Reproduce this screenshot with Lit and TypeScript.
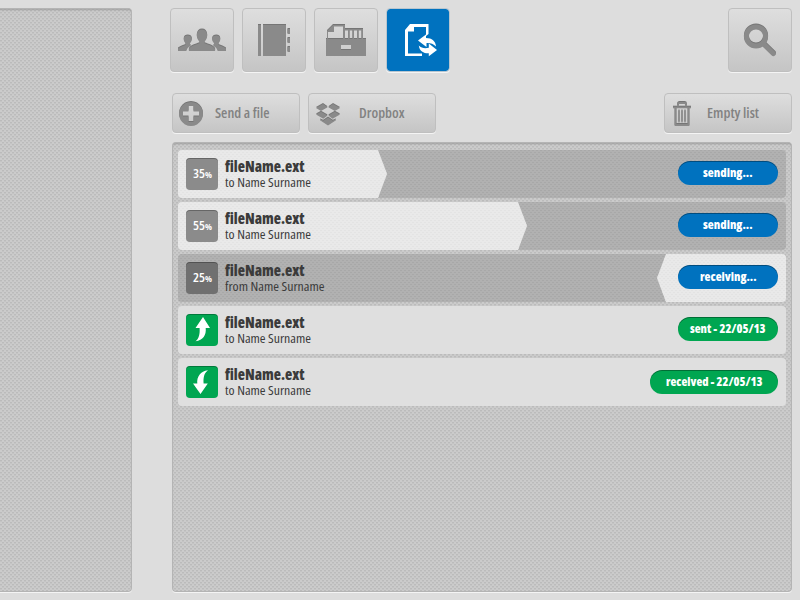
import { LitElement, html, svg, css, nothing } from "lit";
import { customElement, property } from "lit/decorators.js";

/** Text condensed to a set width. */
@customElement("fit-text")
class FitText extends LitElement {
  @property() text = "";
  @property({ type: Number }) width = 50;
  @property({ type: Number }) size = 12;
  @property({ type: Number }) weight = 400;
  static styles = css`
    :host { display: block; line-height: 0; }
    svg { display: block; overflow: visible; }
    text { font-family: "Open Sans", "Noto Sans", sans-serif; font-stretch: 75%; fill: currentColor; }
  `;
  render() {
    return html`<svg width=${this.width} height="16">
      <text x="0" y="12" font-size=${this.size} font-weight=${this.weight}
        textLength=${this.width} lengthAdjust="spacingAndGlyphs">${this.text}</text>
    </svg>`;
  }
}

const icons: Record<string, unknown> = {
  people: svg`<g transform="translate(0 2)">
    <path d="M14 47V44.5C16 43 19 42 21.5 41V39.2C20 37.5 19.6 36.5 19.8 34.5C20 32.5 21.500 31.500 23.7 31.500C26 31.500 27.6 32.500 27.8 34.5C28 36.5 27.4 37.6 26 39.2V41L27 41.9C24.5 43 23 44 22.3 47Z"/>
    <path d="M62 47V44.5C60 43 57 42 54.5 41V39.2C56 37.5 56.4 36.5 56.2 34.5C56 32.5 54.5 31.500 52.3 31.500C50 31.500 48.4 32.500 48.2 34.5C48 36.5 48.6 37.6 50 39.2V41L49 41.9C51.5 43 53 44 53.7 47Z"/>
    <path d="M24.9 47V45C26.6 42 31 41 35.5 39.3V37.8C33.3 35.6 32.7 33 32.8 31C33 27.500 35 25.500 38 25.500C41 25.500 43 27.500 43.2 31C43.3 33 42.7 35.6 40.5 37.8V39.3C45 41 49.4 42 51.1 45V47Z"/></g>`,
  book: svg`<path d="M22 21h3v31h-3zM27 21h23v31H27zM51.5 25h2.5v5h-2.500zM51.5 34h2.5v5h-2.500zM51.5 43h2.5v5h-2.500z"/>`,
  archive: svg`<path fill-rule="evenodd" d="M18 35h1V27L25 21h12v4h18v10h3v17H18zM26 22.5V28h-6v7h15V22.5zM37 26.5v8.5h3v-8.5zM41.5 26.5v8.5h3v-8.5zM46 26.5v8.5h3v-8.5zM50.5 26.5v8.5h3v-8.5zM33 41v5h10v-5z" transform="translate(0 2)"/>`,
  transfer: svg`<g transform="translate(6 0)"><path fill-rule="evenodd" d="M24 22H42.5V32L40 34V25H28V29.5H22V51.5H36V54H19V28z"/>
    <path d="M32 38.5L40 32.5V36C46 36 49.5 39 50 44.5C47.5 41.7 44 40.8 40.5 41V45z"/>
    <path d="M51 48L42.8 54.3V51.3C38 51.5 33.5 49.5 32.8 43.5C35.5 46.2 39 46.6 42.8 45.7V41.5z"/></g>`,
  search: svg`<circle cx="28" cy="28.5" r="9.6" fill="none" stroke="currentColor" stroke-width="5"/>
    <path d="M35 35.5L45.3 45.5" stroke="currentColor" stroke-width="5.2" stroke-linecap="round"/>`,
  plus: svg`<path fill-rule="evenodd" d="M12 1a12 12 0 1 0 .01 0zM9.5 5h5v5.5h5.5v5h-5.5v5.5h-5v-5.5H4v-5h5.500z"/>`,
  dropbox: svg`<path d="M7 3L11.600 6.200L5 10L0 7zM17 3L24 7L18.800 10L12.300 6.200zM0 13.500L5 10.700L11.600 14.500L7.300 17.700zM24 13.500L18.800 10.700L12.300 14.500L16.600 17.700zM4 18.500L7.200 19.800L12 16.500L16.800 19.800L20 18.500V19.300L12 24.500L4 19.300z"/>`,
  trash: svg`<g fill="none" stroke="currentColor"><path d="M5 5.500V3.500Q5 2 6.500 2H11.500Q13 2 13 3.500V5.500" stroke-width="1.800"/><path d="M0 6.500H18" stroke-width="1.600"/><path d="M2.500 7V24H15.500V7" stroke-width="1.800"/><path d="M6 9.500V21.500M9 9.500V21.500M12 9.500V21.500" stroke-width="1.200"/></g>`,
  up: svg`<path d="M17 3L24 14H19.7C20.5 21 17 26.5 9.5 27.3C13 24.5 14 20 13.6 14H9.5z"/>`,
  down: svg`<path d="M14.5 28L7 17.5H11.3C10.5 11 14.5 5 22 4.2C18 7 17.2 11.5 17.6 17.5H21.8z"/>`,
};

interface Transfer {
  who: string; whoWidth: number; badge: string; kind: string;
  label: string; labelWidth: number; pillWidth: number; fill?: number; offset?: number;
}
const transfers: Transfer[] = [
  { who: "to Name Surname", whoWidth: 86, badge: "35", kind: "send", label: "sending...", labelWidth: 49.5, pillWidth: 100, fill: 209 },
  { who: "to Name Surname", whoWidth: 86, badge: "55", kind: "send", label: "sending...", labelWidth: 49.5, pillWidth: 100, fill: 349 },
  { who: "from Name Surname", whoWidth: 99.5, badge: "25", kind: "receive", label: "receiving...", labelWidth: 56.5, pillWidth: 100, fill: 129 },
  { who: "to Name Surname", whoWidth: 86, badge: "up", kind: "done", label: "sent - 22/05/13", labelWidth: 75.5, pillWidth: 100 },
  { who: "to Name Surname", whoWidth: 86, badge: "down", kind: "done", label: "received - 22/05/13", labelWidth: 96.5, pillWidth: 128, offset: 1 },
];

@customElement("app-root")
class AppRoot extends LitElement {
  static styles = css`
    :host { display: flex; width: 800px; height: 600px; box-sizing: border-box; padding: 8px 8px 8px 0; background: #ddd; overflow: hidden; font-family: "Open Sans", sans-serif; }
    * { box-sizing: border-box; }
    .weave {
      background:
        conic-gradient(from 0deg at 2px 1px, transparent 75%, #bbb 0) 0 0 / 4px 4px,
        conic-gradient(from 0deg at 2px 1px, transparent 75%, #bbb 0) 2px 2px / 4px 4px,
        conic-gradient(from 0deg at 2px 2px, transparent 75%, #c4c4c4 0) 0 0 / 4px 4px,
        conic-gradient(from 0deg at 2px 2px, transparent 75%, #c4c4c4 0) 2px 2px / 4px 4px,
        #cbcbcb;
      box-shadow: inset 0 0 0 1px #b4b4b4, inset 0 2px 2px #0003, 0 1px 0 #f4f4f4;
      border-radius: 4px;
    }
    .side { width: 136px; margin-left: -4px; flex: none; }
    .main { margin-left: 38px; flex: 1; display: flex; flex-direction: column; }
    .tabs { display: flex; gap: 8px; height: 64px; }
    .tab, .action { background: linear-gradient(#dedede, #c5c5c5); border: 1px solid #bfbfbf; border-radius: 4px; box-shadow: 0 1px 0 #f4f4f4; color: #8a8a8a; }
    .tab { width: 64px; height: 64px; }
    .tab svg { display: block; margin: -7px; }
    .tab.find svg { margin: 0 0 0 2px; }
    .find .icon { transform: translate(-3px, -1px); }
    .tab.active { background: #0072bf; border-color: #b9c6cf; color: #fff; background-clip: padding-box; }
    .push { margin-left: auto; }
    svg.icon { fill: currentColor; overflow: visible; }
    .engraved { filter: drop-shadow(0 -1px 0 #757575); }
    .book { transform: translateY(2px); }
    .actions { display: flex; gap: 8px; margin: 21px 0 0 2px; height: 40px; }
    .action { width: 128px; height: 40px; display: flex; align-items: flex-start; padding: 7px 0 0 6px; }
    .action fit-text { color: #828282; margin-top: 5px; }
    .list { margin: 9px 0 0 2px; flex: 1; padding: 8px 6px; display: flex; flex-direction: column; gap: 4px; }
    .row { position: relative; height: 48px; flex: none; display: flex; align-items: flex-start; border-radius: 4px; background: #dfdfdf; overflow: hidden; padding: 0 8px; }
    .row.send, .row.receive { background: conic-gradient(from 0deg at 2px 1px, transparent 75%, #a8a8a8 0) 2px 0/4px 4px, conic-gradient(from 0deg at 2px 1px, transparent 75%, #a8a8a8 0) 0 2px/4px 4px, #b1b1b1; }
    .fill { position: absolute; top: 0; bottom: 0; left: 0; background: conic-gradient(from 0deg at 2px 1px, transparent 75%, #e3e3e3 0) 2px 0/4px 4px, conic-gradient(from 0deg at 2px 1px, transparent 75%, #e3e3e3 0) 0 2px/4px 4px, #e9e9e9; clip-path: polygon(0 0, calc(100% - 9px) 0, 100% 50%, calc(100% - 9px) 100%, 0 100%); }
    .receive .fill { left: auto; right: 0; clip-path: polygon(9px 0, 100% 0, 100% 100%, 9px 100%, 0 50%); }
    .badge, .names, .pill { position: relative; }
    .badge { width: 32px; height: 32px; margin-top: 8px; border-radius: 4px; background: #8b8b8b; color: #fff; display: flex; padding: 8px 0 0 7px; box-shadow: inset 0 1px 0 #0004; }
    .receive .badge { background: #707070; }
    .done .badge { background: #00a651; padding: 0; }
    .names { margin: 10px 0 0 7px; color: #3b3b3b; }
    .names fit-text + fit-text { margin-top: -0.7px; }
    .pill { height: 24px; border-radius: 12px; margin: 11px 0 0 auto; background: #0072bf; color: #fff; display: flex; justify-content: center; padding-top: 4px; box-shadow: inset 0 1px 0 #0005; }
    .done .pill { background: #00a651; }
  `;

  private tab(name: string, cls = "") {
    const find = name === "search";
    const s = find ? 58 : 76;
    return html`<div class="tab ${cls}"><svg class="icon ${name} ${cls === "active" ? "" : "engraved"}" width=${s} height=${s} viewBox="0 0 ${s} ${s}">${icons[name]}</svg></div>`;
  }

  private action(name: string, w: number, label: string, lw: number, left: number, gap: number, cls = "") {
    return html`<div class="action ${cls}">
      <svg class="icon engraved" style="margin-left:${left}px" width=${w} height="26" viewBox="0 0 ${w} 26">${icons[name]}</svg>
      <fit-text style="margin-left:${gap}px" text=${label} width=${lw} size="14" weight="600"></fit-text>
    </div>`;
  }

  private row(t: Transfer) {
    return html`<div class="row ${t.kind}">
      ${t.fill ? html`<div class="fill" style="width:${t.fill}px"></div>` : nothing}
      <div class="badge">${t.kind === "done"
        ? html`<svg class="icon" width="32" height="32">${icons[t.badge]}</svg>`
        : html`<fit-text text=${t.badge} width="12" size="13" weight="600"></fit-text><fit-text text="%" width="7" size="9.5" weight="700"></fit-text>`}</div>
      <div class="names">
        <fit-text text="fileName.ext" width="79.5" size="15" weight="800"></fit-text>
        <fit-text text=${t.who} width=${t.whoWidth} size="12" weight="400"></fit-text>
      </div>
      <div class="pill" style="width:${t.pillWidth}px;margin-top:${11 + (t.offset ?? 0)}px">
        <fit-text text=${t.label} width=${t.labelWidth} size="12" weight="800"></fit-text>
      </div>
    </div>`;
  }

  render() {
    return html`
      <div class="side weave"></div>
      <div class="main">
        <div class="tabs">
          ${this.tab("people")}${this.tab("book")}${this.tab("archive")}${this.tab("transfer", "active")}${this.tab("search", "find push")}
        </div>
        <div class="actions">
          ${this.action("plus", 24, "Send a file", 54.5, -0.5, 12)}
          ${this.action("dropbox", 24, "Dropbox", 45.5, 1, 18.5)}
          ${this.action("trash", 18, "Empty list", 52, 2, 16, "push")}
        </div>
        <div class="list weave">${transfers.map((t) => this.row(t))}</div>
      </div>`;
  }
}
